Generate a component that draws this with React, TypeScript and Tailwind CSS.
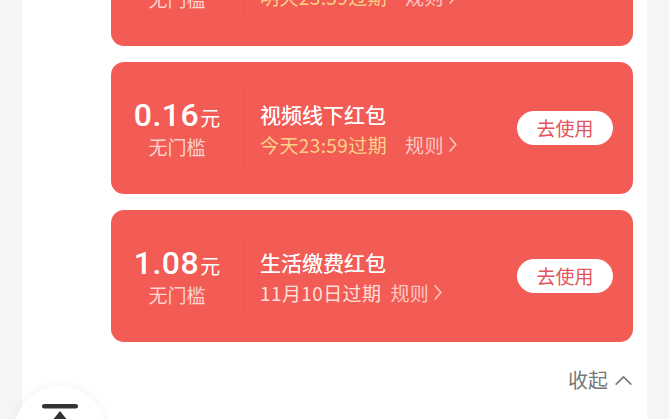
import React from "react";

type Coupon = {
  amount: string;
  name: string;
  expire: string;
  expireColor: string;
  rulesGap: string;
};

const coupons: Coupon[] = [
  { amount: "0.50", name: "视频线下红包", expire: "明天23:59过期", expireColor: "text-[#fbd587]", rulesGap: "ml-[18px]" },
  { amount: "0.16", name: "视频线下红包", expire: "今天23:59过期", expireColor: "text-[#fbd587]", rulesGap: "ml-[18px]" },
  { amount: "1.08", name: "生活缴费红包", expire: "11月10日过期", expireColor: "text-[#fde0dc]", rulesGap: "ml-[9px]" },
];

const Chevron = ({ className }: { className?: string }) => (
  <svg viewBox="0 0 10 18" className={className} fill="none" stroke="currentColor" strokeWidth="1.6" strokeLinecap="round" strokeLinejoin="round">
    <path d="M2 2l6 7-6 7" />
  </svg>
);

function CouponCard({ c, first }: { c: Coupon; first?: boolean }) {
  return (
    <div className={`flex h-[132px] items-center rounded-[13px] bg-[#f35b55] ${first ? "-mt-[86px]" : ""}`}>
      {/* monto */}
      <div className="flex h-[80px] w-[133px] flex-col items-center justify-center border-r border-[#ee5852]">
        <div className="flex h-[32px] items-center overflow-visible text-white">
          <span className="font-['Roboto',sans-serif] text-[32px] font-medium leading-[32px] tracking-[0.5px]">{c.amount}</span>
          <span className="ml-[1px] mt-[6px] text-[20px] leading-[26px]">元</span>
        </div>
        <div className="mt-[5px] text-[19px] leading-[22px] text-[#fdd3cf]">无门槛</div>
      </div>
      {/* info */}
      <div className="flex flex-1 flex-col pl-[16px]">
        <div className="text-[21px] leading-[28px] text-white [text-shadow:0_0_0.5px_#fff]">{c.name}</div>
        <div className="mt-[5px] flex items-center text-[19px] leading-[24px] tracking-[0.4px]">
          <span className={c.expireColor}>{c.expire}</span>
          <span className={`${c.rulesGap} text-[#fcc9c3]`}>规则</span>
          <Chevron className="ml-[4px] h-[17px] w-[10px] text-[#fcc9c3]" />
        </div>
      </div>
      <button className="mr-[20px] flex h-[34px] w-[96px] items-center justify-center rounded-full bg-white text-[19px] text-[#e2545a]">
        去使用
      </button>
    </div>
  );
}

export default function App() {
  return (
    <div className="relative h-[419px] w-[669px] overflow-hidden bg-[#f5f5f5] font-['Noto_Sans_CJK_SC','Noto_Sans',sans-serif]">
      <div className="mx-[22px] h-full bg-white pl-[89px] pr-[14px]">
        <div className="flex flex-col gap-[16px]">
          {coupons.map((c, i) => (
            <CouponCard key={i} c={c} first={i === 0} />
          ))}
        </div>
        <div className="mt-[24px] flex items-center justify-end pr-[0px] text-[20px] leading-[28px] text-[#777777]">
          <span>收起</span>
          <svg viewBox="0 0 20 12" className="ml-[6px] h-[11px] w-[19px]" fill="none" stroke="currentColor" strokeWidth="1.7" strokeLinecap="round" strokeLinejoin="round">
            <path d="M2 10l8-8 8 8" />
          </svg>
        </div>
      </div>
      {/* volver arriba */}
      <div className="absolute left-[14px] top-[386px] flex h-[92px] w-[92px] justify-center rounded-full bg-white pt-[18px] shadow-[0_0_10px_rgba(0,0,0,0.06)]">
        <svg viewBox="0 0 40 30" className="h-[30px] w-[40px]">
          <rect x="2" y="0" width="36" height="4.5" rx="2.2" fill="#333" />
          <path d="M20 7L8 22h24z" fill="#333" />
        </svg>
      </div>
    </div>
  );
}
